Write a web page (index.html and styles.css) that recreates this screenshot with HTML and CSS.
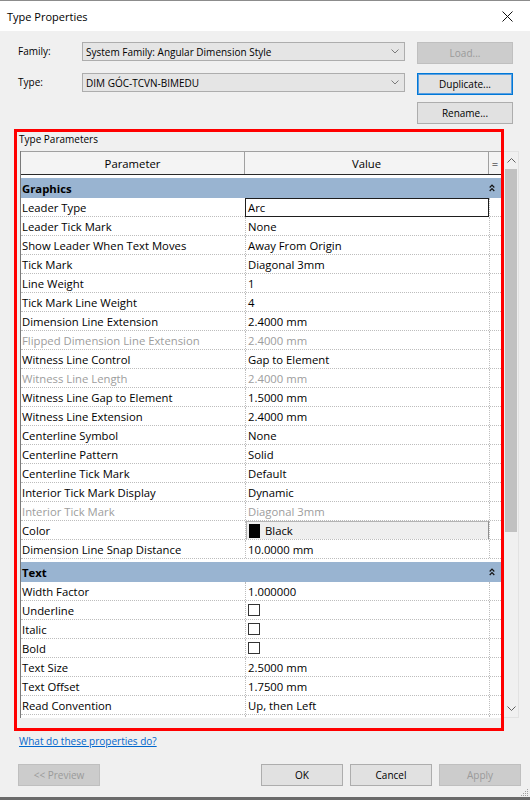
FILE: index.html
```html
<!DOCTYPE html>
<html>
<head>
<meta charset="utf-8">
<link rel="stylesheet" href="styles.css">
</head>
<body>
<div class="window">
  <div class="titlebar">
    <span class="title">Type Properties</span>
    <svg class="close" width="11" height="11" viewBox="0 0 11 11"><path d="M0.5 0.5 L10.5 10.5 M10.5 0.5 L0.5 10.5" stroke="#111" stroke-width="1" fill="none"/></svg>
  </div>
  <div class="content">
    <div class="top">
      <div class="lbl">Family:</div>
      <div class="select"><span>System Family: Angular Dimension Style</span><svg width="8" height="5" viewBox="0 0 8 5"><path d="M0.5 0.5 L4 4 L7.5 0.5" stroke="#7a7a7a" fill="none"/></svg></div>
      <div class="btn disabled">Load...</div>
      <div class="lbl">Type:</div>
      <div class="select"><span>DIM GÓC-TCVN-BIMEDU</span><svg width="8" height="5" viewBox="0 0 8 5"><path d="M0.5 0.5 L4 4 L7.5 0.5" stroke="#7a7a7a" fill="none"/></svg></div>
      <div class="btn focus">Duplicate...</div>
      <div class="btn rename">Rename...</div>
    </div>
    <div class="section-label">Type Parameters</div>
    <div class="table-wrap">
      <div class="grid">
        <div class="head">
          <div class="h1">Parameter</div>
          <div class="h2">Value</div>
          <div class="h3">=</div>
        </div>
        <div class="body">
          <div class="group"><span>Graphics</span><svg width="6" height="8" viewBox="0 0 6 8"><path d="M0.7 3.5 L3 1.2 L5.3 3.5 M0.7 7 L3 4.7 L5.3 7" stroke="#111" stroke-width="1.2" fill="none"/></svg></div>
          <div class="row"><div class="c1">Leader Type</div><div class="c2 edit">Arc</div><div class="c3"></div></div>
          <div class="row"><div class="c1">Leader Tick Mark</div><div class="c2">None</div><div class="c3"></div></div>
          <div class="row"><div class="c1">Show Leader When Text Moves</div><div class="c2">Away From Origin</div><div class="c3"></div></div>
          <div class="row"><div class="c1">Tick Mark</div><div class="c2">Diagonal 3mm</div><div class="c3"></div></div>
          <div class="row"><div class="c1">Line Weight</div><div class="c2">1</div><div class="c3"></div></div>
          <div class="row"><div class="c1">Tick Mark Line Weight</div><div class="c2">4</div><div class="c3"></div></div>
          <div class="row"><div class="c1">Dimension Line Extension</div><div class="c2">2.4000 mm</div><div class="c3"></div></div>
          <div class="row off"><div class="c1">Flipped Dimension Line Extension</div><div class="c2">2.4000 mm</div><div class="c3"></div></div>
          <div class="row"><div class="c1">Witness Line Control</div><div class="c2">Gap to Element</div><div class="c3"></div></div>
          <div class="row off"><div class="c1">Witness Line Length</div><div class="c2">2.4000 mm</div><div class="c3"></div></div>
          <div class="row"><div class="c1">Witness Line Gap to Element</div><div class="c2">1.5000 mm</div><div class="c3"></div></div>
          <div class="row"><div class="c1">Witness Line Extension</div><div class="c2">2.4000 mm</div><div class="c3"></div></div>
          <div class="row"><div class="c1">Centerline Symbol</div><div class="c2">None</div><div class="c3"></div></div>
          <div class="row"><div class="c1">Centerline Pattern</div><div class="c2">Solid</div><div class="c3"></div></div>
          <div class="row"><div class="c1">Centerline Tick Mark</div><div class="c2">Default</div><div class="c3"></div></div>
          <div class="row"><div class="c1">Interior Tick Mark Display</div><div class="c2">Dynamic</div><div class="c3"></div></div>
          <div class="row off"><div class="c1">Interior Tick Mark</div><div class="c2">Diagonal 3mm</div><div class="c3"></div></div>
          <div class="row"><div class="c1">Color</div><div class="c2 colorcell"><div class="colorbtn"><span class="swatch"></span>Black</div></div><div class="c3"></div></div>
          <div class="row"><div class="c1">Dimension Line Snap Distance</div><div class="c2">10.0000 mm</div><div class="c3"></div></div>
          <div class="group"><span>Text</span><svg width="6" height="8" viewBox="0 0 6 8"><path d="M0.7 3.5 L3 1.2 L5.3 3.5 M0.7 7 L3 4.7 L5.3 7" stroke="#111" stroke-width="1.2" fill="none"/></svg></div>
          <div class="row"><div class="c1">Width Factor</div><div class="c2">1.000000</div><div class="c3"></div></div>
          <div class="row"><div class="c1">Underline</div><div class="c2"><span class="check"></span></div><div class="c3"></div></div>
          <div class="row"><div class="c1">Italic</div><div class="c2"><span class="check"></span></div><div class="c3"></div></div>
          <div class="row"><div class="c1">Bold</div><div class="c2"><span class="check"></span></div><div class="c3"></div></div>
          <div class="row"><div class="c1">Text Size</div><div class="c2">2.5000 mm</div><div class="c3"></div></div>
          <div class="row"><div class="c1">Text Offset</div><div class="c2">1.7500 mm</div><div class="c3"></div></div>
          <div class="row"><div class="c1">Read Convention</div><div class="c2">Up, then Left</div><div class="c3"></div></div>
          <div class="row"><div class="c1"></div><div class="c2"></div><div class="c3"></div></div>
        </div>
      </div>
      <div class="scroll">
        <div class="arrow"><svg width="9" height="5" viewBox="0 0 9 5"><path d="M0.5 4.5 L4.5 0.5 L8.5 4.5" stroke="#606060" fill="none"/></svg></div>
        <div class="thumb"></div>
        <div class="spacer"></div>
        <div class="arrow"><svg width="9" height="5" viewBox="0 0 9 5"><path d="M0.5 0.5 L4.5 4.5 L8.5 0.5" stroke="#606060" fill="none"/></svg></div>
      </div>
    </div>
    <a class="help" href="#">What do these properties do?</a>
    <div class="footer">
      <div class="btn disabled wide">&lt;&lt; Preview</div>
      <div class="right">
        <div class="btn wide">OK</div>
        <div class="btn wide">Cancel</div>
        <div class="btn disabled wide">Apply</div>
      </div>
    </div>
  </div>
  <div class="annot"></div>
  <svg class="grip" width="9" height="9" viewBox="0 0 9 9"><g fill="#a0a0a0"><rect x="7" y="1" width="1" height="1"/><rect x="5" y="3" width="1" height="1"/><rect x="7" y="3" width="1" height="1"/><rect x="3" y="5" width="1" height="1"/><rect x="5" y="5" width="1" height="1"/><rect x="7" y="5" width="1" height="1"/><rect x="1" y="7" width="1" height="1"/><rect x="3" y="7" width="1" height="1"/><rect x="5" y="7" width="1" height="1"/><rect x="7" y="7" width="1" height="1"/></g></svg>
</div>
</body>
</html>
```

FILE: styles.css
```css
body {
  margin: 0;
  background: #f0f0f0;
}
.window {
  position: relative;
  width: 530px;
  height: 800px;
  box-sizing: border-box;
  background: #f0f0f0;
  border-top: 1px solid #8c8c8c;
  border-bottom: 3px solid #6a6a6a;
  font-family: "Open Sans", "Noto Sans", sans-serif;
  font-size: 10px;
  color: #000;
  overflow: hidden;
}
.titlebar {
  height: 30px;
  background: #fff;
  display: flex;
  align-items: center;
  justify-content: space-between;
  padding: 0 17px 0 7px;
}
.title {
  font-size: 11px;
}
.close {
  display: block;
}
.content {
  padding: 11px 9px 0 18px;
}
.top {
  display: grid;
  grid-template-columns: 52px 323px 96px;
  grid-template-rows: 31px 29px 22px;
  column-gap: 12px;
  align-items: start;
}
.lbl {
  height: 19px;
  line-height: 19px;
}
.select {
  height: 19px;
  box-sizing: border-box;
  border: 1px solid #adadad;
  background: #e5e5e5;
  display: flex;
  align-items: center;
  justify-content: space-between;
  padding: 0 5px 0 3px;
}
.select svg {
  display: block;
}
.btn {
  height: 22px;
  box-sizing: border-box;
  border: 1px solid #adadad;
  background: #e1e1e1;
  display: flex;
  align-items: center;
  justify-content: center;
}
.btn.disabled {
  background: #cccccc;
  border-color: #bfbfbf;
  color: #9a9a9a;
}
.btn.focus {
  border: 1px solid #0078d7;
  box-shadow: inset 0 0 0 1px #5a9fe0;
}
.btn.rename {
  grid-column: 3;
}
.btn.wide {
  width: 82px;
}
.section-label {
  margin: 8px 0 5px 1px;
  height: 14px;
  line-height: 14px;
}
.table-wrap {
  margin-left: 2px;
  width: 499px;
  height: 567px;
  display: flex;
  gap: 2px;
}
.grid {
  width: 481px;
  height: 567px;
  box-sizing: border-box;
  border-left: 1px solid #7a7a7a;
  background: #fff;
  overflow: hidden;
  display: flex;
  flex-direction: column;
}
.head {
  display: grid;
  grid-template-columns: 224px 244px 12px;
  height: 24px;
  box-sizing: border-box;
  border-top: 1px solid #a0a0a0;
  border-bottom: 1px solid #2a2a2a;
  background: #f4f4f4;
  font-size: 11.3px;
}
.head > div {
  display: flex;
  align-items: center;
  justify-content: center;
}
.h1, .h2 {
  border-right: 1px solid #a0a0a0;
}
.body {
  flex: 1;
  overflow: hidden;
  font-size: 11.3px;
}
.group {
  height: 23px;
  box-sizing: border-box;
  border-top: 3px solid #fff;
  background: #99b4d1;
  display: flex;
  align-items: center;
  justify-content: space-between;
  padding: 0 6px 0 1px;
  font-weight: bold;
}
.group svg {
  display: block;
}
.row {
  display: grid;
  grid-template-columns: 224px 244px 12px;
  height: 19px;
  box-sizing: border-box;
  border-bottom: 1px dotted #bdbdbd;
}
.row > div {
  display: flex;
  align-items: center;
  white-space: nowrap;
  overflow: hidden;
}
.c1 {
  padding-left: 1px;
}
.c2 {
  border-left: 1px dotted #bdbdbd;
  padding-left: 2px;
}
.c3 {
  border-left: 1px dotted #bdbdbd;
}
.row.off {
  color: #9d9d9d;
}
.c2.edit {
  border: 1px solid #1e1e1e;
  padding-left: 2px;
  margin-bottom: -1px;
  position: relative;
}
.c2.colorcell {
  padding: 0;
}
.colorbtn {
  flex: 1;
  height: 19px;
  box-sizing: border-box;
  margin-bottom: -1px;
  border: 1px solid #b4b4b4;
  border-right-color: #8e8e8e;
  border-bottom-color: #8e8e8e;
  background: #efefef;
  display: flex;
  align-items: center;
  padding-left: 2px;
}
.swatch {
  display: inline-block;
  width: 11px;
  height: 14px;
  background: #000;
  margin-right: 5px;
}
.check {
  display: inline-block;
  width: 12px;
  height: 12px;
  box-sizing: border-box;
  border: 1px solid #333;
  background: #fff;
}
.scroll {
  width: 16px;
  height: 567px;
  box-sizing: border-box;
  background: #f0f0f0;
  border: 1px solid #e2e2e2;
  display: flex;
  flex-direction: column;
  align-items: stretch;
}
.arrow {
  height: 17px;
  display: flex;
  align-items: center;
  justify-content: center;
}
.arrow svg {
  display: block;
}
.thumb {
  height: 363px;
  margin: 0 1px;
  background: #c1c1c1;
}
.spacer {
  flex: 1;
}
.help {
  display: block;
  margin: 16px 0 0 1px;
  height: 14px;
  line-height: 14px;
  color: #0066cc;
  text-decoration: underline;
  width: max-content;
}
.footer {
  margin-top: 16px;
  display: flex;
  justify-content: space-between;
}
.right {
  display: flex;
  gap: 7px;
}
.annot {
  position: absolute;
  left: 14px;
  top: 128px;
  width: 490px;
  height: 602px;
  box-sizing: border-box;
  border: 3px solid #ff0000;
}
.grip {
  position: absolute;
  right: 1px;
  bottom: 0;
}
```
